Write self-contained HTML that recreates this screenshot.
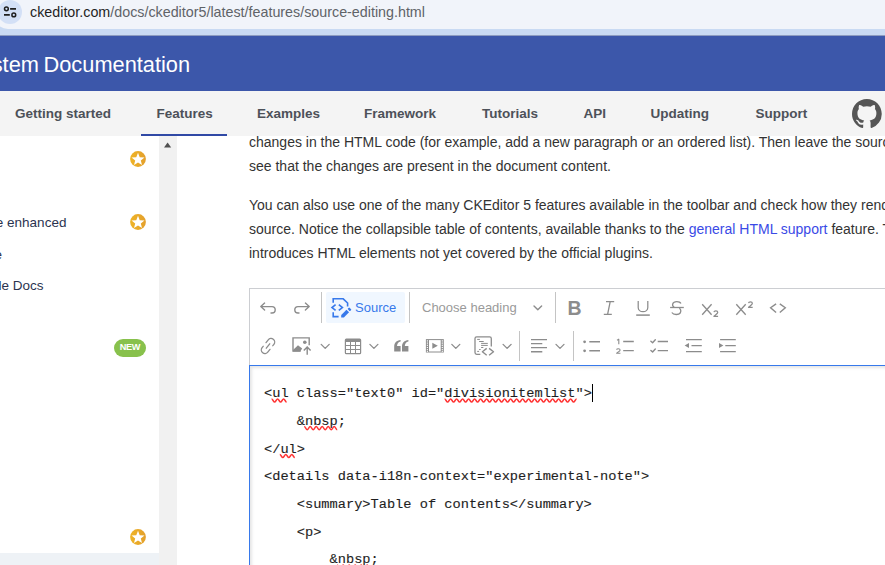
<!DOCTYPE html>
<html><head><meta charset="utf-8">
<style>
*{margin:0;padding:0;box-sizing:border-box}
html,body{width:885px;height:565px;overflow:hidden;background:#fff;font-family:"Liberation Sans",sans-serif}
.a{position:absolute;white-space:nowrap}
#addr{left:0;top:0;width:885px;height:36px;background:#c9daf3}
#addrbar{left:-6px;top:-10px;width:960px;height:39px;background:#f1f4fa;border-radius:0 0 0 14px}
#addrline{left:0;top:35px;width:885px;height:1px;background:#8d9cc0}
#tune{left:-2px;top:0px;width:24px;height:24px;border-radius:50%;background:#d3e0f6}
#url{left:30px;top:4px;font-size:14.3px;line-height:17px;color:#5f6368}
#url b{font-weight:normal;color:#1f1f1f}
#hdr{left:0;top:36px;width:885px;height:55px;background:#3c57aa}
#ttl{top:52px;font-size:21.8px;line-height:26px;color:#fff}
#nav{left:0;top:91px;width:885px;height:45px;background:#f4f4f4}
.ni{top:105px;font-size:13.5px;font-weight:bold;color:#4d5159;line-height:17px}
#ul{left:141px;top:134px;width:86px;height:2px;background:#3049a5}
#sb{left:159px;top:136px;width:18px;height:429px;background:#f1f1f1}
#sbband{left:0;top:553px;width:159px;height:12px;background:#eef2f6}
.side{font-size:13.5px;color:#2b3350;line-height:17px}
.star{width:16px;height:16px}
#new{left:114px;top:339px;width:32px;height:18px;border-radius:9px;background:#88c14c;color:#fff;font-size:9.2px;font-weight:bold;text-align:center;line-height:17px;letter-spacing:-0.35px;text-indent:-0.3px}
.p{left:249px;font-size:14px;line-height:24px;color:#333}
.p a{color:#3a4ae6;text-decoration:none}
#ed{left:249px;top:288px;width:700px;height:300px;border:1px solid #ccced2;border-right:none;border-bottom:none}
#src{left:326px;top:292px;width:79px;height:31px;background:#f0f7ff;border-radius:2px}
#srct{left:355px;top:299.5px;font-size:13px;line-height:15px;color:#3779eb}
#head{left:422px;top:299.5px;font-size:13px;line-height:15px;color:#9a9a9a}
#editable{left:249px;top:365px;width:700px;height:300px;border:1px solid #3779eb;border-right:none;border-bottom:none;box-shadow:inset 2px 2px 3px rgba(0,0,0,.1)}
.code{left:264px;font-family:"Liberation Mono",monospace;font-size:13.67px;line-height:17px;color:#1e1e1e;-webkit-text-stroke:0.12px #1e1e1e}
.sp{}
#caret{left:592px;top:383.5px;width:1.4px;height:18px;background:#000}
</style></head>
<body>
<div class="a" id="addr"></div>
<div class="a" id="addrbar"></div>
<div class="a" id="addrline"></div>
<div class="a" id="tune"></div>
<div class="a" id="url"><b>ckeditor.com</b>/docs/ckeditor5/latest/features/source-editing.html</div>

<div class="a" id="hdr"></div>
<div class="a" id="ttl" style="right:840px">Ecosy<span>stem</span>&nbsp;</div>
<div class="a" id="ttl2" style="left:43.5px;top:52px;font-size:21.8px;line-height:26px;color:#fff">Documentation</div>

<div class="a" id="nav"></div>
<div class="a ni" style="left:15px">Getting started</div>
<div class="a ni" style="left:156.5px">Features</div>
<div class="a ni" style="left:257px">Examples</div>
<div class="a ni" style="left:364px">Framework</div>
<div class="a ni" style="left:482px">Tutorials</div>
<div class="a ni" style="left:583.5px">API</div>
<div class="a ni" style="left:650.5px">Updating</div>
<div class="a ni" style="left:755.5px">Support</div>
<div class="a" id="ul"></div>

<div class="a" id="sb"></div>
<div class="a" id="sbband"></div>
<div class="a side" style="right:818.6px;top:214.3px">Source code editing mode enhanced</div>
<div class="a side" style="right:883px;top:245.5px">Document outline and table of contents in one single page and style</div>
<div class="a side" style="right:841.6px;top:276.6px">Paste from Google Docs</div>
<div class="a" id="new">NEW</div>

<div class="a p" style="top:130px">changes in the HTML code (for example, add a new paragraph or an ordered list). Then leave the source editing mode and</div>
<div class="a p" style="top:154px">see that the changes are present in the document content.</div>
<div class="a p" style="top:193px">You can also use one of the many CKEditor 5 features available in the toolbar and check how they render in the HTML</div>
<div class="a p" style="top:217px">source. Notice the collapsible table of contents, available thanks to the <a>general HTML support</a> feature. This</div>
<div class="a p" style="top:241px">introduces HTML elements not yet covered by the official plugins.</div>

<div class="a" id="ed"></div>
<div class="a" id="src"></div>
<div class="a" id="srct">Source</div>
<div class="a" id="head">Choose heading</div>
<div class="a" id="editable"></div>

<div class="a code" style="top:385px"><span>&lt;</span><span class="sp">ul</span> class="text0" id="<span class="sp">divisionitemlist</span>"&gt;</div>
<div class="a code" style="top:412.7px">&nbsp;&nbsp;&nbsp;&nbsp;&amp;<span class="sp">nbsp</span>;</div>
<div class="a code" style="top:440.5px">&lt;/<span class="sp">ul</span>&gt;</div>
<div class="a code" style="top:468.1px">&lt;details data-i18n-context="experimental-note"&gt;</div>
<div class="a code" style="top:495.8px">&nbsp;&nbsp;&nbsp;&nbsp;&lt;summary&gt;Table of contents&lt;/summary&gt;</div>
<div class="a code" style="top:523.5px">&nbsp;&nbsp;&nbsp;&nbsp;&lt;p&gt;</div>
<div class="a code" style="top:551.2px">&nbsp;&nbsp;&nbsp;&nbsp;&nbsp;&nbsp;&nbsp;&nbsp;&amp;<span class="sp">nbsp</span>;</div>
<div class="a" id="caret"></div>

<!-- ICONS OVERLAY -->
<svg class="a" style="left:0;top:0" width="885" height="565" viewBox="0 0 885 565">
<defs><linearGradient id="stg" x1="0" y1="0" x2="1" y2="0"><stop offset="0" stop-color="#efb426"/><stop offset="1" stop-color="#e39f2c"/></linearGradient></defs>
<!-- tune icon -->
<g fill="none" stroke="#1f1f1f" stroke-width="1.5"><circle cx="6.4" cy="8.85" r="1.9"/><circle cx="13.8" cy="14.9" r="1.9"/></g>
<g stroke="#1f1f1f" stroke-width="1.6"><path d="M10.1 8.85H16M4 14.9H9.8"/></g>
<!-- scrollbar arrow -->
<polygon points="164,147.4 171.2,147.4 167.6,142.6" fill="#505050"/>
<!-- stars -->
<circle cx="138" cy="159" r="7.9" fill="url(#stg)"/><polygon fill="#fff" points="138.00,152.80 139.73,157.21 144.47,157.50 140.81,160.51 142.00,165.10 138.00,162.55 134.00,165.10 135.19,160.51 131.53,157.50 136.27,157.21"/>
<circle cx="138" cy="222" r="7.9" fill="url(#stg)"/><polygon fill="#fff" points="138.00,215.80 139.73,220.21 144.47,220.50 140.81,223.51 142.00,228.10 138.00,225.55 134.00,228.10 135.19,223.51 131.53,220.50 136.27,220.21"/>
<circle cx="138" cy="537" r="7.9" fill="url(#stg)"/><polygon fill="#fff" points="138.00,530.80 139.73,535.21 144.47,535.50 140.81,538.51 142.00,543.10 138.00,540.55 134.00,543.10 135.19,538.51 131.53,535.50 136.27,535.21"/>
<!-- github -->
<g transform="translate(852,99) scale(1.86)"><path fill="#555" d="M8 0C3.58 0 0 3.58 0 8c0 3.54 2.29 6.53 5.47 7.59.4.07.55-.17.55-.38 0-.19-.01-.82-.01-1.49-2.01.37-2.53-.49-2.69-.94-.09-.23-.48-.94-.82-1.13-.28-.15-.68-.52-.01-.53.63-.01 1.08.58 1.23.82.72 1.21 1.87.87 2.33.66.07-.52.28-.87.51-1.07-1.78-.2-3.64-.89-3.64-3.95 0-.87.31-1.59.82-2.15-.08-.2-.36-1.02.08-2.12 0 0 .67-.21 2.2.82.64-.18 1.32-.27 2-.27.68 0 1.36.09 2 .27 1.53-1.04 2.2-.82 2.2-.82.44 1.1.16 1.92.08 2.12.51.56.82 1.27.82 2.15 0 3.07-1.87 3.75-3.65 3.95.29.25.54.73.54 1.48 0 1.07-.01 1.93-.01 2.2 0 .21.15.46.55.38A8.013 8.013 0 0016 8c0-4.42-3.58-8-8-8z"/></g>
<!-- toolbar separators -->
<g fill="#c4c4c4"><rect x="321" y="292" width="1" height="31"/><rect x="409" y="292" width="1" height="31"/><rect x="555" y="292" width="1" height="31"/><rect x="519" y="331" width="1" height="30"/><rect x="573" y="331" width="1" height="30"/></g>
<!-- row 1 -->
<g fill="none" stroke="#8c8c8c" stroke-width="1.4" stroke-linecap="round" stroke-linejoin="round">
<path d="M264.6 303.1 L260.8 306.6 L264.6 310.1 M261 306.6 H272 A3.2 3.2 0 0 1 272 313 H271"/>
<path d="M305.4 303.1 L309.2 306.6 L305.4 310.1 M309 306.6 H298 A3.2 3.2 0 0 0 298 313 H299"/>
</g>
<!-- source icon -->
<g fill="none" stroke="#3779eb" stroke-width="1.6">
<path d="M333.2 302.8 V298.8 H343.2 L347.6 303 V306.5"/>
<path d="M333.2 312.3 V316.6 H338.6"/>
<path d="M335.6 304.7 L332 307.5 L335.6 310.4 M338.8 304.7 L342.4 307.5 L338.8 310.4"/>
</g>
<g fill="#3779eb" transform="translate(341.2 317.6) rotate(-45)"><path d="M0 0 L1.9 -1.85 H9.3 V1.85 H1.9 Z"/><rect x="10.6" y="-1.6" width="2.3" height="3.2" rx="0.5"/></g>
<g fill="none" stroke="#8c8c8c" stroke-width="1.4" stroke-linecap="round" stroke-linejoin="round">
<path d="M534 306 L537.8 309.8 L541.6 306"/>
</g>
<text x="567.4" y="314.9" font-family="Liberation Sans" font-weight="bold" font-size="19.5" fill="#8c8c8c">B</text>
<g fill="none" stroke="#8c8c8c" stroke-width="1.3">
<path d="M606 301.7 H614.2 M603.8 314.3 H611.8 M610.2 301.7 L607.6 314.3"/>
<path d="M638.2 301 V307.4 A4.8 4.3 0 0 0 647.8 307.4 V301" stroke-width="1.25"/>
<path d="M636.2 315.1 H649.8" stroke-width="1.5"/>
<path d="M670.1 307.5 H683.8"/>
<path d="M680.9 303.6 C679.8 301 673.8 300.7 672.7 303.9 C672.2 305.5 673 306.5 674.2 307.2 M679.3 308.2 C681 309.2 681.2 311.6 680.2 313 C678.8 315 673.6 315.2 671.8 312.5"/>
<path d="M702.2 304.3 L711.6 314.8 M711.6 304.3 L702.2 314.8"/>
<path d="M736.3 304.3 L745.7 314.8 M745.7 304.3 L736.3 314.8"/>
<path d="M776.1 303.9 L770.6 307.8 L776.1 312.5 M779.8 303.9 L785.3 307.8 L779.8 312.5" stroke-width="1.4"/>
</g>
<path transform="translate(713.30 310.20) scale(1.040 1.000)" d="M0.6 1.9 C0.8 0.4 4.2 0.2 4.3 2.1 C4.4 3.3 3.2 3.9 0.6 6.1 H4.6" fill="none" stroke="#8c8c8c" stroke-width="1.15" stroke-linejoin="round"/>
<path transform="translate(747.90 301.20) scale(1.040 1.000)" d="M0.6 1.9 C0.8 0.4 4.2 0.2 4.3 2.1 C4.4 3.3 3.2 3.9 0.6 6.1 H4.6" fill="none" stroke="#8c8c8c" stroke-width="1.15" stroke-linejoin="round"/>
<!-- row 2 -->
<g fill="none" stroke="#8c8c8c" stroke-width="1.3" stroke-linecap="round">
<g transform="rotate(-52 268 346)">
<path d="M269.4 342.4 H273 A3.6 3.6 0 0 1 273 349.6 H271.2"/>
<path d="M266.6 349.6 H263 A3.6 3.6 0 0 1 263 342.4 H264.8"/>
<path d="M265.2 346 H270.8"/>
</g>
</g>
<g fill="none" stroke="#8c8c8c" stroke-width="1.4">
<path d="M309.2 345.2 V337.9 H293 V351 H300.7"/>
<path d="M307.2 354.7 V346.6 M303.8 350.6 L307.2 347 L310.6 350.6"/>
</g>
<g fill="#8c8c8c">
<polygon points="293,350 298,345.3 302.2,348.6 300.2,351.6 293,351.6"/>
<circle cx="304.8" cy="342.2" r="1.8"/>
</g>
<!-- chevrons -->
<g fill="none" stroke="#8c8c8c" stroke-width="1.3" stroke-linecap="round" stroke-linejoin="round">
<path d="M321.2 344.4 L325.2 348.4 L329.2 344.4"/>
<path d="M369.9 344.4 L373.9 348.4 L377.9 344.4"/>
<path d="M451.8 344.4 L455.8 348.4 L459.8 344.4"/>
<path d="M503.1 344.4 L507.1 348.4 L511.1 344.4"/>
<path d="M556 344.4 L560 348.4 L564 344.4"/>
</g>
<!-- table -->
<rect x="344.8" y="338.6" width="16.4" height="15.6" rx="1.5" fill="#8c8c8c"/>
<g fill="#fff">
<rect x="346" y="342" width="4" height="3"/><rect x="351" y="342" width="4" height="3"/><rect x="356" y="342" width="4" height="3"/>
<rect x="346" y="346" width="4" height="3"/><rect x="351" y="346" width="4" height="3"/><rect x="356" y="346" width="4" height="3"/>
<rect x="346" y="350" width="4" height="3"/><rect x="351" y="350" width="4" height="3"/><rect x="356" y="350" width="4" height="3"/>
</g>
<!-- quote -->
<g fill="#8c8c8c">
<path d="M394.2 351.6 V346.6 C394.2 343 396.5 340.6 400.6 340.1 V341.6 C398.4 342.1 397.1 343.8 397 346.1 H400.6 V351.6 Z"/>
<path d="M402 351.6 V346.6 C402 343 404.3 340.6 408.4 340.1 V341.6 C406.2 342.1 404.9 343.8 404.8 346.1 H408.4 V351.6 Z"/>
</g>
<!-- media -->
<rect x="425.9" y="339.1" width="17.9" height="13.4" fill="#8c8c8c"/>
<rect x="429" y="340.1" width="11.7" height="11.4" fill="#fff"/>
<g fill="#fff">
<rect x="426.8" y="340.3" width="1.2" height="1.2"/><rect x="426.8" y="342.5" width="1.2" height="1.2"/><rect x="426.8" y="344.7" width="1.2" height="1.2"/><rect x="426.8" y="346.9" width="1.2" height="1.2"/><rect x="426.8" y="349.1" width="1.2" height="1.2"/><rect x="426.8" y="351.1" width="1.2" height="0.9"/>
<rect x="441.7" y="340.3" width="1.2" height="1.2"/><rect x="441.7" y="342.5" width="1.2" height="1.2"/><rect x="441.7" y="344.7" width="1.2" height="1.2"/><rect x="441.7" y="346.9" width="1.2" height="1.2"/><rect x="441.7" y="349.1" width="1.2" height="1.2"/><rect x="441.7" y="351.1" width="1.2" height="0.9"/>
</g>
<polygon points="432.3,342.8 432.3,348.8 437.8,345.8" fill="#8c8c8c"/>
<!-- html embed -->
<g fill="none" stroke="#8c8c8c" stroke-width="1.3" stroke-linejoin="round">
<path d="M491.3 346.5 V338.5 Q491.3 336.8 489.6 336.8 H476.7 Q475 336.8 475 338.5 V352.6 Q475 354.3 476.7 354.3 H480.3"/>
<path d="M486.7 348.4 L482.4 351.8 L486.7 355.2 M489.1 348.4 L493.5 351.8 L489.1 355.2" stroke-width="1.4"/>
</g>
<g stroke="#8c8c8c" stroke-width="1">
<path d="M477.2 339.4 H479.9 M479.1 341.5 H483.7 M481.1 343.4 H487.8 M481.1 345.4 H487.8 M481.1 347.5 H483.3 M479.1 349.5 H480.6 M477.2 351.4 H479.1"/>
</g>
<!-- align -->
<g stroke="#8c8c8c" stroke-width="1.45">
<path d="M531 339.6 H547 M531 343.6 H542.3 M531 347.6 H547 M531 351.7 H542.3"/>
<path d="M589.3 341.8 H600 M589.3 350.8 H600"/>
<path d="M623.2 341.5 H633.8 M623.2 350.6 H633.8"/>
<path d="M657.7 341.5 H668 M657.7 350.6 H668"/>
<path d="M686 339.6 H701.8 M691.5 345.6 H701.8 M686 351.6 H701.8"/>
<path d="M720.1 339.6 H735.8 M725.3 345.6 H735.8 M720.1 351.6 H735.8"/>
</g>
<g fill="#8c8c8c">
<circle cx="584.6" cy="341.8" r="1.4"/><circle cx="584.6" cy="350.8" r="1.4"/>
<polygon points="684.6,345.4 689,342.9 689,348"/>
<polygon points="723.4,345.4 719,342.9 719,348"/>
</g>
<g fill="none" stroke="#8c8c8c" stroke-width="1.4" stroke-linecap="round" stroke-linejoin="round">
<path d="M650.9 341.3 L652.6 342.7 L655.3 339.8 M650.9 350.5 L652.6 351.9 L655.3 349"/>
</g>
<path d="M617 340.2 L618.8 339.2 V344.2" fill="none" stroke="#8c8c8c" stroke-width="1.1" stroke-linejoin="round"/>
<path transform="translate(616.00 348.20) scale(0.960 0.831)" d="M0.6 1.9 C0.8 0.4 4.2 0.2 4.3 2.1 C4.4 3.3 3.2 3.9 0.6 6.1 H4.6" fill="none" stroke="#8c8c8c" stroke-width="1.15" stroke-linejoin="round"/>
<!-- wavy underlines -->
<g fill="none" stroke="#ff3535" stroke-width="1.5">
<path d="M271.60 398.90 C272.68 398.90 273.52 402.10 274.60 402.10 C275.68 402.10 276.52 398.90 277.60 398.90 C278.68 398.90 279.52 402.10 280.60 402.10 C281.68 402.10 282.52 398.90 283.60 398.90 C284.68 398.90 285.52 402.10 286.60 402.10"/>
<path d="M444.60 398.90 C445.68 398.90 446.52 402.10 447.60 402.10 C448.68 402.10 449.52 398.90 450.60 398.90 C451.68 398.90 452.52 402.10 453.60 402.10 C454.68 402.10 455.52 398.90 456.60 398.90 C457.68 398.90 458.52 402.10 459.60 402.10 C460.68 402.10 461.52 398.90 462.60 398.90 C463.68 398.90 464.52 402.10 465.60 402.10 C466.68 402.10 467.52 398.90 468.60 398.90 C469.68 398.90 470.52 402.10 471.60 402.10 C472.68 402.10 473.52 398.90 474.60 398.90 C475.68 398.90 476.52 402.10 477.60 402.10 C478.68 402.10 479.52 398.90 480.60 398.90 C481.68 398.90 482.52 402.10 483.60 402.10 C484.68 402.10 485.52 398.90 486.60 398.90 C487.68 398.90 488.52 402.10 489.60 402.10 C490.68 402.10 491.52 398.90 492.60 398.90 C493.68 398.90 494.52 402.10 495.60 402.10 C496.68 402.10 497.52 398.90 498.60 398.90 C499.68 398.90 500.52 402.10 501.60 402.10 C502.68 402.10 503.52 398.90 504.60 398.90 C505.68 398.90 506.52 402.10 507.60 402.10 C508.68 402.10 509.52 398.90 510.60 398.90 C511.68 398.90 512.52 402.10 513.60 402.10 C514.68 402.10 515.52 398.90 516.60 398.90 C517.68 398.90 518.52 402.10 519.60 402.10 C520.68 402.10 521.52 398.90 522.60 398.90 C523.68 398.90 524.52 402.10 525.60 402.10 C526.68 402.10 527.52 398.90 528.60 398.90 C529.68 398.90 530.52 402.10 531.60 402.10 C532.68 402.10 533.52 398.90 534.60 398.90 C535.68 398.90 536.52 402.10 537.60 402.10 C538.68 402.10 539.52 398.90 540.60 398.90 C541.68 398.90 542.52 402.10 543.60 402.10 C544.68 402.10 545.52 398.90 546.60 398.90 C547.68 398.90 548.52 402.10 549.60 402.10 C550.68 402.10 551.52 398.90 552.60 398.90 C553.68 398.90 554.52 402.10 555.60 402.10 C556.68 402.10 557.52 398.90 558.60 398.90 C559.68 398.90 560.52 402.10 561.60 402.10 C562.68 402.10 563.52 398.90 564.60 398.90 C565.68 398.90 566.52 402.10 567.60 402.10 C568.68 402.10 569.52 398.90 570.60 398.90 C571.68 398.90 572.52 402.10 573.60 402.10 C574.68 402.10 575.52 398.90 576.60 398.90"/>
<path d="M304.20 426.60 C305.28 426.60 306.12 429.80 307.20 429.80 C308.28 429.80 309.12 426.60 310.20 426.60 C311.28 426.60 312.12 429.80 313.20 429.80 C314.28 429.80 315.12 426.60 316.20 426.60 C317.28 426.60 318.12 429.80 319.20 429.80 C320.28 429.80 321.12 426.60 322.20 426.60 C323.28 426.60 324.12 429.80 325.20 429.80 C326.28 429.80 327.12 426.60 328.20 426.60 C329.28 426.60 330.12 429.80 331.20 429.80 C332.28 429.80 333.12 426.60 334.20 426.60 C335.28 426.60 336.12 429.80 337.20 429.80"/>
<path d="M279.80 454.40 C280.88 454.40 281.72 457.60 282.80 457.60 C283.88 457.60 284.72 454.40 285.80 454.40 C286.88 454.40 287.72 457.60 288.80 457.60 C289.88 457.60 290.72 454.40 291.80 454.40 C292.88 454.40 293.72 457.60 294.80 457.60"/>
<path d="M337.20 565.10 C338.28 565.10 339.12 568.30 340.20 568.30 C341.28 568.30 342.12 565.10 343.20 565.10 C344.28 565.10 345.12 568.30 346.20 568.30 C347.28 568.30 348.12 565.10 349.20 565.10 C350.28 565.10 351.12 568.30 352.20 568.30 C353.28 568.30 354.12 565.10 355.20 565.10 C356.28 565.10 357.12 568.30 358.20 568.30 C359.28 568.30 360.12 565.10 361.20 565.10 C362.28 565.10 363.12 568.30 364.20 568.30 C365.28 568.30 366.12 565.10 367.20 565.10 C368.28 565.10 369.12 568.30 370.20 568.30"/>
</g>
</svg>
</body></html>
